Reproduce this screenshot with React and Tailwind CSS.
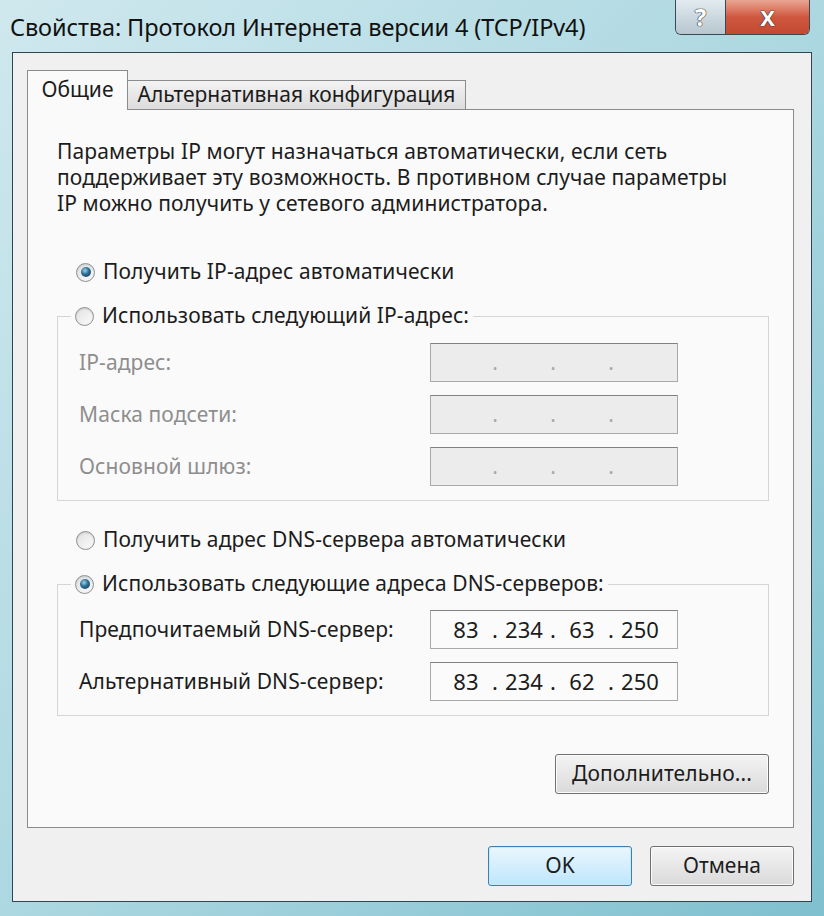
function Radio({ checked }) {
    return (
        <span className="w-[19px] h-[19px] rounded-full border border-[#8c9296] bg-gradient-to-br from-[#e2e2e2] to-[#fbfbfb] flex items-center justify-center shrink-0 shadow-[inset_0_1px_2px_rgba(0,0,0,0.15)]">
            {checked && (
                <span className="w-[10px] h-[10px] rounded-full bg-[radial-gradient(circle_at_40%_35%,#9fd3ea_0%,#2a6b93_45%,#123850_100%)]" />
            )}
        </span>
    );
}

function IpBox({ parts, disabled }) {
    return (
        <div
            className={
                "w-[248px] h-[39px] border border-[#a7a9ab] border-t-[#7f8184] flex items-center pl-[12px] " +
                (disabled ? "bg-[#ececec] text-[#a9a9a9]" : "bg-[#fbfbfb] text-[#1c1c1c]")
            }
        >
            {parts.map((p, i) => (
                <div key={i} className="flex items-center">
                    {i > 0 && <span className="w-[12px] text-center">.</span>}
                    <span className="w-[46px] text-center">{p}</span>
                </div>
            ))}
        </div>
    );
}

function Btn({ children, w, def }) {
    return (
        <div
            className={
                "h-[40px] rounded-[3px] border flex items-center justify-center text-[21px] text-[#1c1c1c] " +
                w +
                (def
                    ? " border-[#3c7fb1] bg-gradient-to-b from-[#eaf6fd] to-[#bee6fd] shadow-[inset_0_0_0_1px_#c6e9fb]"
                    : " border-[#707070] bg-gradient-to-b from-[#f4f4f4] to-[#dadada] shadow-[inset_0_0_0_1px_#fbfbfb]")
            }
        >
            {children}
        </div>
    );
}

export default function App() {
    return (
        // окно
        <div className="w-[824px] h-[916px] flex flex-col bg-gradient-to-br from-[#cfe8ee] via-[#add8e1] to-[#7fc0cf] font-['Noto_Sans',sans-serif] overflow-hidden">
            {/* заголовок */}
            <div className="h-[52px] flex items-start shrink-0">
                <div className="pl-[10px] pt-[10px] text-[23.5px] leading-[34px] text-[#111] tracking-[-0.1px] whitespace-nowrap">
                    Свойства: Протокол Интернета версии 4 (TCP/IPv4)
                </div>
                <div className="ml-auto mr-[14px] flex border border-t-0 border-[#3b4a52] rounded-b-[6px] overflow-hidden shrink-0">
                    <div className="w-[50px] h-[34px] bg-gradient-to-b from-[#e2ebf0] to-[#b7c6cf] border-r border-[#3b4a52] flex items-center justify-center text-[24px] font-bold text-white [text-shadow:0_0_1px_#333,0_0_1px_#333,0_0_1px_#333]">
                        ?
                    </div>
                    <div className="w-[83px] h-[34px] bg-gradient-to-b from-[#e8a593] via-[#d0573f] to-[#c14a31] flex items-center justify-center text-[22px] font-bold text-white [text-shadow:0_0_1px_#333,0_0_1px_#333,0_0_1px_#333]">
                        X
                    </div>
                </div>
            </div>

            {/* клиентская область */}
            <div className="mx-[12px] mb-[14px] flex-1 bg-[#f0f0f0] border border-[#2d4651] pl-[14px] pr-[17px] pt-[17px] flex flex-col">
                {/* вкладки */}
                <div className="flex items-end h-[39px]">
                    <div className="w-[101px] h-[40px] -mb-px relative z-10 bg-[#fafafa] border border-b-0 border-[#898c8f] flex items-center justify-center text-[21px] text-[#1c1c1c] pb-[2px]">
                        Общие
                    </div>
                    <div className="w-[338px] h-[29px] bg-gradient-to-b from-[#f3f3f3] to-[#dcdcdc] border border-l-0 border-b-0 border-[#898c8f] flex items-center justify-center text-[21px] text-[#1c1c1c] whitespace-nowrap">
                        Альтернативная конфигурация
                    </div>
                </div>

                {/* панель */}
                <div className="h-[719px] bg-[#fafafa] border border-[#898c8f] pl-[29px] pr-[24px] pt-[28px] flex flex-col text-[21px] text-[#1c1c1c] tracking-[0.1px]">
                    <p className="leading-[26px] whitespace-nowrap">
                        Параметры IP могут назначаться автоматически, если сеть
                        <br />
                        поддерживает эту возможность. В противном случае параметры
                        <br />
                        IP можно получить у сетевого администратора.
                    </p>

                    <div className="mt-[43px] ml-[19px] h-[26px] flex items-center gap-[8px]">
                        <Radio checked />
                        <span>Получить IP-адрес автоматически</span>
                    </div>

                    <fieldset className="mt-[18px] border border-[#d3d6d9] pl-[21px] pr-[20px] pb-[14px]">
                        <legend className="-ml-[8px] h-[26px] flex items-center gap-[8px] pl-[4px] pr-[4px]">
                            <Radio />
                            <span>Использовать следующий IP-адрес:</span>
                        </legend>
                        <div className="flex flex-col gap-[13px] pt-[14px]">
                            <div className="flex items-center">
                                <span className="w-[351px] text-[#8e8e8e]">IP-адрес:</span>
                                <IpBox parts={["", "", "", ""]} disabled />
                            </div>
                            <div className="flex items-center">
                                <span className="w-[351px] text-[#8e8e8e]">Маска подсети:</span>
                                <IpBox parts={["", "", "", ""]} disabled />
                            </div>
                            <div className="flex items-center">
                                <span className="w-[351px] text-[#8e8e8e]">Основной шлюз:</span>
                                <IpBox parts={["", "", "", ""]} disabled />
                            </div>
                        </div>
                    </fieldset>

                    <div className="mt-[26px] ml-[19px] h-[26px] flex items-center gap-[8px]">
                        <Radio />
                        <span>Получить адрес DNS-сервера автоматически</span>
                    </div>

                    <fieldset className="mt-[18px] border border-[#d3d6d9] pl-[21px] pr-[20px] pb-[14px]">
                        <legend className="-ml-[8px] h-[26px] flex items-center gap-[8px] pl-[4px] pr-[4px]">
                            <Radio checked />
                            <span>Использовать следующие адреса DNS-серверов:</span>
                        </legend>
                        <div className="flex flex-col gap-[13px] pt-[13px] text-[22px]">
                            <div className="flex items-center">
                                <span className="w-[351px] text-[21px]">Предпочитаемый DNS-сервер:</span>
                                <IpBox parts={["83", "234", "63", "250"]} />
                            </div>
                            <div className="flex items-center">
                                <span className="w-[351px] text-[21px]">Альтернативный DNS-сервер:</span>
                                <IpBox parts={["83", "234", "62", "250"]} />
                            </div>
                        </div>
                    </fieldset>

                    <div className="mt-[38px] flex justify-end">
                        <Btn w="w-[214px]">Дополнительно...</Btn>
                    </div>
                </div>

                {/* кнопки */}
                <div className="mt-[18px] flex justify-end gap-[18px]">
                    <Btn w="w-[144px]" def>
                        OK
                    </Btn>
                    <Btn w="w-[144px]">Отмена</Btn>
                </div>
            </div>
        </div>
    );
}
